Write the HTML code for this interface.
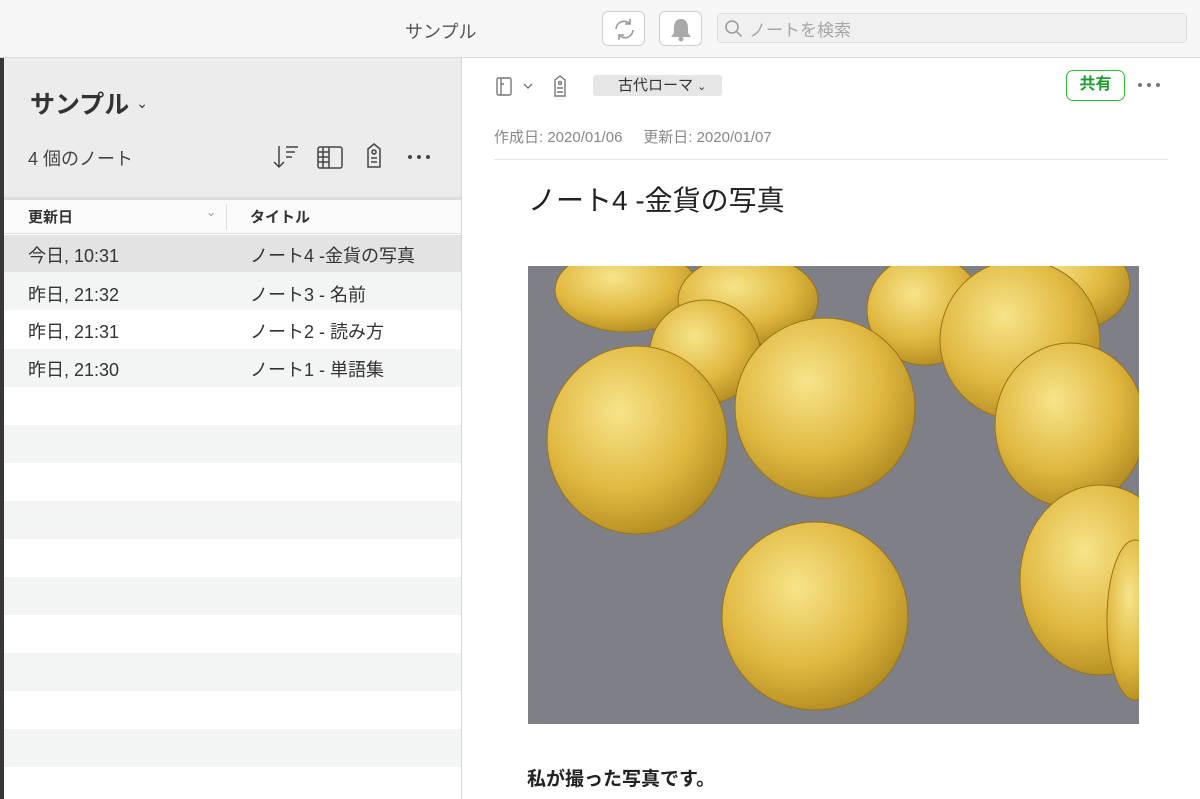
<!DOCTYPE html>
<html><head><meta charset="utf-8"><style>
*{margin:0;padding:0;box-sizing:border-box}
body{width:1200px;height:799px;overflow:hidden;background:#fff;font-family:"Liberation Sans","Noto Sans CJK JP",sans-serif;color:#333;position:relative}
.abs{position:absolute}
.top{left:0;top:0;width:1200px;height:58px;background:#f6f6f6;border-bottom:1px solid #d9d9d9}
.btn{top:11px;width:43px;height:35px;border:1px solid #cfcfcf;border-radius:6px;background:#fff}
.side{left:0;top:58px;width:462px;height:741px;background:#fff;border-right:1px solid #d6d6d6}
.row{left:4px;width:457px;height:38px;font-size:18px;line-height:38px;color:#333}
</style></head><body>
<div class="abs top"></div>
<div class="abs" style="left:405px;top:18px;font-size:18px;color:#555">サンプル</div>
<div class="abs btn" style="left:602px"><svg width="43" height="35" viewBox="0 0 43 35"><g fill="none" stroke="#999" stroke-width="1.6"><path d="M13 17a8 8 0 0 1 14-5"/><path d="M30 18a8 8 0 0 1-14 5"/><path d="M27 7v5h-5"/><path d="M16 28v-5h5"/></g></svg></div>
<div class="abs btn" style="left:659px"><svg width="43" height="35" viewBox="0 0 43 35"><path d="M21 7c-5 0-7 4-7 9v5l-3 4h20l-3-4v-5c0-5-2-9-7-9z" fill="#a9a9a9"/><circle cx="21" cy="27" r="2.5" fill="#a9a9a9"/></svg></div>
<div class="abs" style="left:717px;top:13px;width:470px;height:30px;border:1px solid #dcdcdc;border-radius:5px;background:#f0f0f0"></div>
<svg class="abs" style="left:724px;top:19px" width="20" height="20"><circle cx="8" cy="8" r="6" fill="none" stroke="#999" stroke-width="1.5"/><path d="M12.5 12.5l5 5" stroke="#999" stroke-width="1.5"/></svg>
<div class="abs" style="left:749px;top:16px;font-size:17px;color:#a6a6a6">ノートを検索</div>

<div class="abs side"></div>
<div class="abs" style="left:0;top:58px;width:4px;height:741px;background:#3b3636"></div>
<div class="abs" style="left:4px;top:58px;width:457px;height:140px;background:#ececec"></div>
<div class="abs" style="left:30px;top:85px;font-size:25px;font-weight:bold;color:#333">サンプル <span style="font-size:14px;font-weight:normal;vertical-align:5px">⌄</span></div>
<div class="abs" style="left:28px;top:145px;font-size:18px;color:#444">4 個のノート</div>
<svg class="abs" style="left:270px;top:142px" width="170" height="30" viewBox="0 0 170 30"><g fill="none" stroke="#444" stroke-width="1.5"><path d="M9 4v21M4 20l5 5 5-5M16 5h12M16 10h9M16 15h6"/><rect x="48" y="5" width="24" height="21" rx="2"/><path d="M59 5v21M48 10h11M48 15h11M48 20h11M53 5v21"/><path d="M98 7l6-5 6 5v18h-12z"/><circle cx="104" cy="10" r="2"/><path d="M101 16h6M101 20h6"/></g><g fill="#444"><circle cx="140" cy="15" r="2"/><circle cx="149" cy="15" r="2"/><circle cx="158" cy="15" r="2"/></g></svg>
<div class="abs" style="left:4px;top:197px;width:457px;height:3px;background:#ddd"></div>
<div class="abs" style="left:4px;top:200px;width:457px;height:34px;background:#fafafa;border-bottom:1px solid #e0e0e0"></div>
<div class="abs" style="left:28px;top:206px;font-size:15px;font-weight:bold;color:#333">更新日</div>
<div class="abs" style="left:206px;top:205px;font-size:12px;color:#999">⌄</div>
<div class="abs" style="left:226px;top:204px;width:1px;height:26px;background:#ddd"></div>
<div class="abs" style="left:250px;top:206px;font-size:15px;font-weight:bold;color:#333">タイトル</div>

<div class="abs row" style="top:235px;height:37px;background:#e3e3e3"></div>
<div class="abs row" style="top:272px;background:#f3f4f4"></div>
<div class="abs row" style="top:349px;background:#f3f4f4"></div>
<div class="abs row" style="top:425px;background:#f3f4f4"></div>
<div class="abs row" style="top:501px;background:#f3f4f4"></div>
<div class="abs row" style="top:577px;background:#f3f4f4"></div>
<div class="abs row" style="top:653px;background:#f3f4f4"></div>
<div class="abs row" style="top:729px;background:#f3f4f4"></div>
<div class="abs" style="left:28px;top:242px;font-size:18px">今日, 10:31</div>
<div class="abs" style="left:250px;top:242px;font-size:18px">ノート4 -金貨の写真</div>
<div class="abs" style="left:28px;top:281px;font-size:18px">昨日, 21:32</div>
<div class="abs" style="left:250px;top:281px;font-size:18px">ノート3 - 名前</div>
<div class="abs" style="left:28px;top:318px;font-size:18px">昨日, 21:31</div>
<div class="abs" style="left:250px;top:318px;font-size:18px">ノート2 - 読み方</div>
<div class="abs" style="left:28px;top:356px;font-size:18px">昨日, 21:30</div>
<div class="abs" style="left:250px;top:356px;font-size:18px">ノート1 - 単語集</div>

<svg class="abs" style="left:494px;top:74px" width="80" height="26" viewBox="0 0 80 26"><g fill="none" stroke="#777" stroke-width="1.4"><rect x="3" y="4" width="14" height="17" rx="1.5"/><path d="M7 4v17M7 10h3"/><path d="M30 10l4 4 4-4"/><path d="M61 6l5-4 5 4v16h-10z"/><circle cx="66" cy="9" r="1.5"/><path d="M63 14h6M63 18h6"/></g></svg>
<div class="abs" style="left:593px;top:75px;width:129px;height:21px;background:#e6e6e6;border-radius:3px;font-size:15px;line-height:21px;padding-left:25px;color:#333">古代ローマ <span style="font-size:11px">⌄</span></div>
<div class="abs" style="left:1066px;top:70px;width:59px;height:31px;border:1.5px solid #2dbe3f;border-radius:7px;color:#1e9e30;font-size:16px;font-weight:bold;text-align:center;line-height:28px">共有</div>
<svg class="abs" style="left:1136px;top:80px" width="30" height="10"><g fill="#777"><circle cx="4" cy="5" r="2"/><circle cx="13" cy="5" r="2"/><circle cx="22" cy="5" r="2"/></g></svg>
<div class="abs" style="left:494px;top:126px;font-size:15px;color:#888">作成日: 2020/01/06 &nbsp;&nbsp;&nbsp;&nbsp;更新日: 2020/01/07</div>
<div class="abs" style="left:494px;top:159px;width:674px;height:1px;background:#e4e4e4"></div>
<div class="abs" style="left:528px;top:179px;font-size:28px;color:#222">ノート4 -金貨の写真</div>

<svg class="abs" style="left:528px;top:266px" width="611" height="458" viewBox="528 266 611 458">
<defs><radialGradient id="g" cx="40%" cy="35%" r="70%"><stop offset="0" stop-color="#f7e48a"/><stop offset=".6" stop-color="#e0b840"/><stop offset="1" stop-color="#b08a20"/></radialGradient>
<clipPath id="c"><rect x="528" y="266" width="611" height="458"/></clipPath></defs>
<rect x="528" y="266" width="611" height="458" fill="#7f7f87"/>
<g clip-path="url(#c)" fill="url(#g)" stroke="#9a7418" stroke-width="1">
<ellipse cx="627" cy="290" rx="72" ry="42"/>
<ellipse cx="1060" cy="285" rx="70" ry="48"/>
<ellipse cx="925" cy="310" rx="58" ry="55"/>
<ellipse cx="748" cy="300" rx="70" ry="45"/>
<ellipse cx="705" cy="352" rx="55" ry="52"/>
<ellipse cx="1020" cy="340" rx="80" ry="80"/>
<ellipse cx="1070" cy="425" rx="75" ry="82"/>
<ellipse cx="637" cy="440" rx="90" ry="94"/>
<ellipse cx="825" cy="408" rx="90" ry="90"/>
<ellipse cx="1100" cy="580" rx="80" ry="95"/>
<ellipse cx="1135" cy="620" rx="28" ry="80"/>
<ellipse cx="815" cy="616" rx="93" ry="94"/>
</g></svg>
<div class="abs" style="left:527px;top:764px;font-size:19px;font-weight:bold;color:#222">私が撮った写真です。</div>
</body></html>
